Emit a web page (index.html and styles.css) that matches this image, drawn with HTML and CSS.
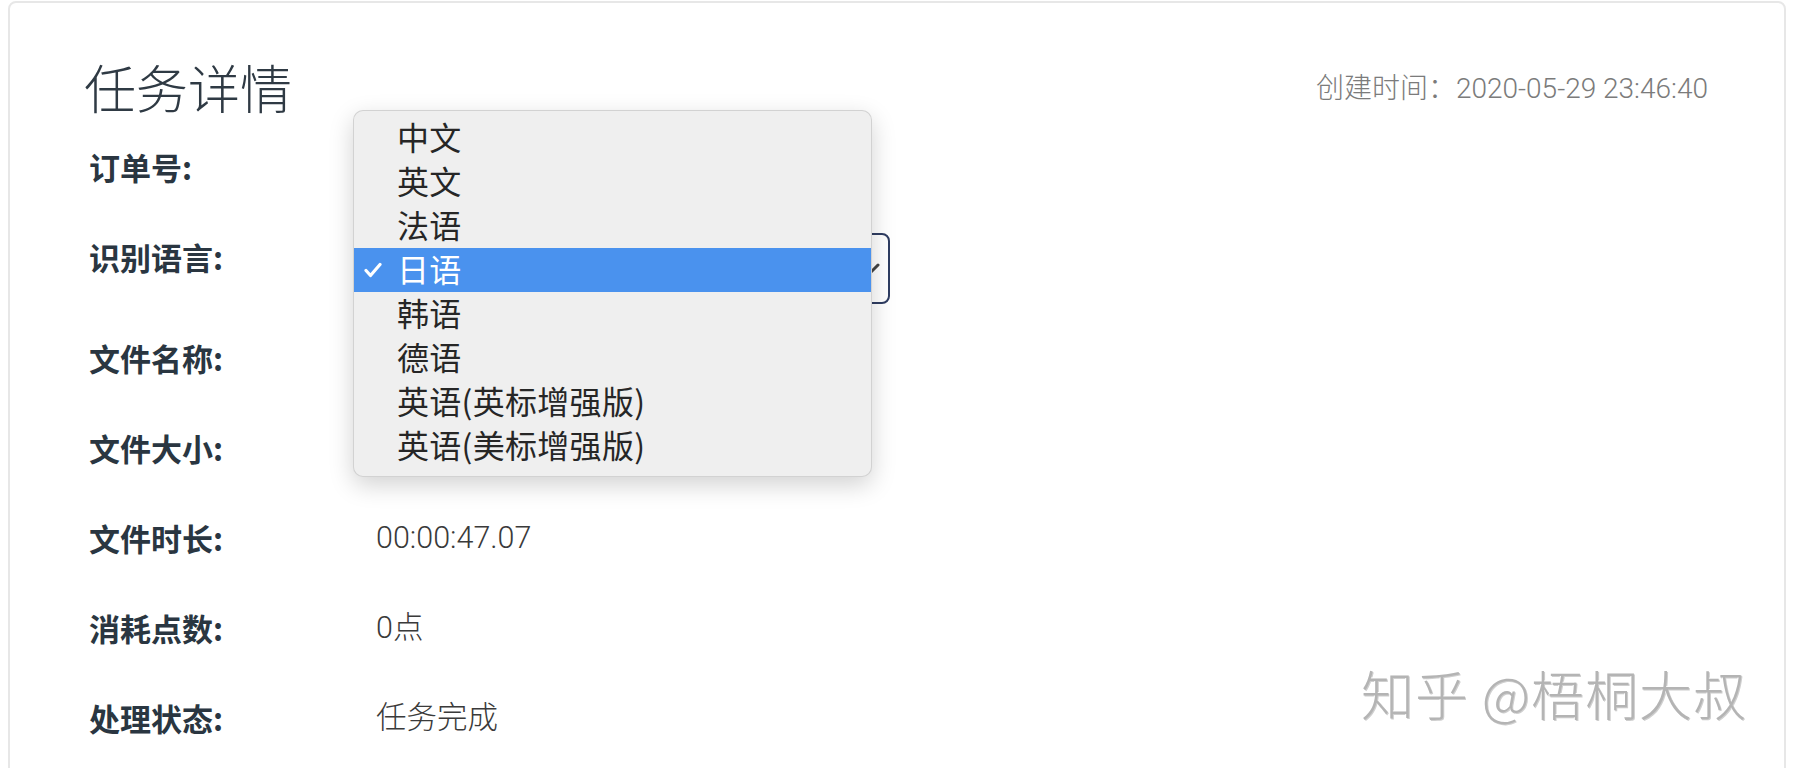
FILE: index.html
```html
<!DOCTYPE html>
<html lang="zh-CN">
<head>
<meta charset="utf-8">
<title>任务详情</title>
<link rel="stylesheet" href="styles.css">
</head>
<body>
<div class="card">
  <div class="head">
    <h1 class="title">任务详情</h1>
    <div class="created">创建时间：2020-05-29 23:46:40</div>
  </div>
  <div class="rows">
    <div class="row"><div class="label">订单号:</div><div class="value"></div></div>
    <div class="row row-select">
      <div class="label">识别语言:</div>
      <div class="value">
        <div class="select">
          <svg class="chev" width="20" height="12" viewBox="0 0 20 12"><polyline points="2,2 10,10 18,2" fill="none" stroke="#444" stroke-width="3" stroke-linecap="round" stroke-linejoin="round"/></svg>
        </div>
      </div>
    </div>
    <div class="row"><div class="label">文件名称:</div><div class="value"></div></div>
    <div class="row"><div class="label">文件大小:</div><div class="value"></div></div>
    <div class="row"><div class="label">文件时长:</div><div class="value">00:00:47.07</div></div>
    <div class="row"><div class="label">消耗点数:</div><div class="value">0点</div></div>
    <div class="row"><div class="label">处理状态:</div><div class="value">任务完成</div></div>
  </div>
</div>

<ul class="dropdown">
  <li class="opt">中文</li>
  <li class="opt">英文</li>
  <li class="opt">法语</li>
  <li class="opt selected"><svg class="check" width="18" height="16" viewBox="0 0 18 16"><polyline points="2,8.5 6.5,13.5 16,2.5" fill="none" stroke="#fff" stroke-width="3.2" stroke-linecap="round" stroke-linejoin="round"/></svg>日语</li>
  <li class="opt">韩语</li>
  <li class="opt">德语</li>
  <li class="opt">英语(英标增强版)</li>
  <li class="opt">英语(美标增强版)</li>
</ul>

<div class="watermark">知乎 @梧桐大叔</div>
</body>
</html>
```

FILE: styles.css
```css
html, body {
  margin: 0;
  padding: 0;
  background: #ffffff;
  overflow: hidden;
}
body {
  width: 1794px;
  height: 768px;
  position: relative;
  font-family: Roboto, "Noto Sans CJK SC", sans-serif;
  color: #333;
}
.card {
  margin: 1px 8px 0 8px;
  height: 820px;
  border: 2px solid #e7e7e7;
  border-radius: 8px;
  box-sizing: border-box;
}
.head {
  display: flex;
  justify-content: space-between;
  align-items: center;
  padding: 54px 76px 0 74px;
  height: 60px;
}
.head .title {
  margin: 0;
  font-size: 52px;
  line-height: 60px;
  font-weight: 300;
  color: #2f3a44;
  font-family: "Noto Sans CJK SC", sans-serif;
}
.created {
  font-size: 28px;
  line-height: 30px;
  margin-top: 4px;
  color: #7b7b7b;
  font-weight: 300;
}
.rows {
  display: flex;
  flex-direction: column;
  gap: 40px;
  margin-top: 25px;
  padding-left: 79px;
}
.row {
  display: flex;
  align-items: flex-start;
  height: 50px;
}
.row-select {
  height: 61px;
}
.label {
  width: 287px;
  flex: none;
  font-size: 31px;
  line-height: 50px;
  font-weight: 700;
  color: #2a3641;
  font-family: "Noto Sans CJK SC", sans-serif;
}
.value {
  font-size: 30.5px;
  line-height: 50px;
  color: #3a3a3a;
  font-weight: 300;
}
.select {
  margin-top: 1px;
  width: 514px;
  height: 71px;
  box-sizing: border-box;
  border: 2px solid #2f3d62;
  border-radius: 8px;
  display: flex;
  align-items: center;
  justify-content: flex-end;
  padding: 0 8px 0 20px;
}
.dropdown {
  position: absolute;
  left: 353px;
  top: 110px;
  width: 519px;
  margin: 0;
  padding: 5px 0 10px 0;
  list-style: none;
  background: #efefef;
  border: 1px solid rgba(0, 0, 0, 0.12);
  border-radius: 10px;
  box-sizing: border-box;
  height: 367px;
  box-shadow: 0 8px 24px rgba(0, 0, 0, 0.18);
  font-family: "Noto Sans CJK SC", sans-serif;
}
.opt {
  position: relative;
  height: 44px;
  line-height: 40px;
  padding-left: 43px;
  font-size: 32px;
  color: #262626;
  letter-spacing: 0.3px;
}
.opt.selected {
  background: #4a92ee;
  color: #ffffff;
}
.check {
  position: absolute;
  left: 10px;
  top: 14px;
}
.watermark {
  position: absolute;
  left: 1361px;
  top: 660px;
  font-size: 53px;
  line-height: 66px;
  color: #b4b4b4;
  font-weight: 300;
  letter-spacing: 1px;
  font-family: "Noto Sans CJK SC", sans-serif;
  text-shadow: -1px -1px 0 rgba(255, 255, 255, 0.9), 1px 1px 0 #cfcfcf;
  white-space: nowrap;
}
```
